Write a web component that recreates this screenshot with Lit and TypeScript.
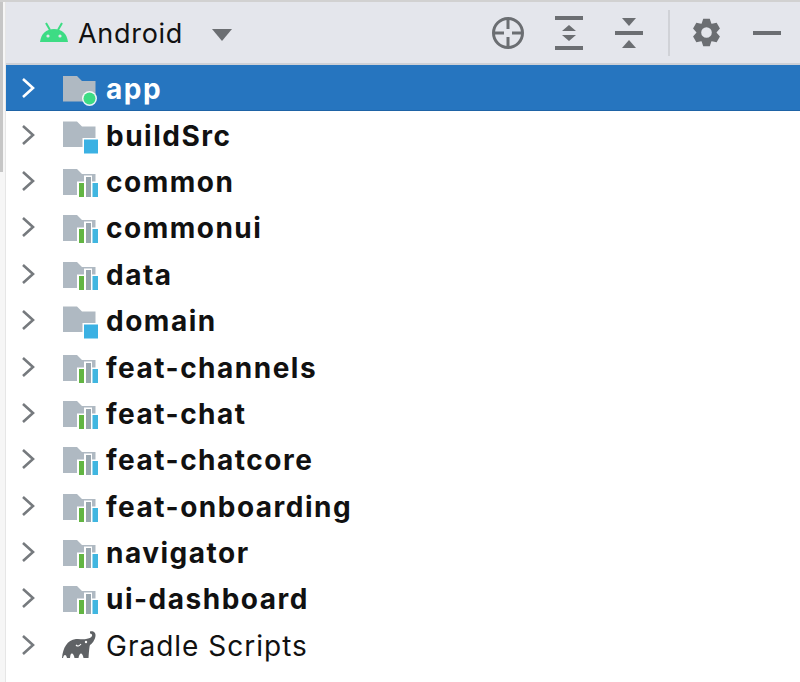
import { LitElement, html, css, svg } from 'lit';
import { customElement } from 'lit/decorators.js';

type Kind = 'module' | 'lib' | 'bars' | 'gradle';

const rows: { name: string; kind: Kind; bold?: boolean; selected?: boolean }[] = [
  { name: 'app', kind: 'module', bold: true, selected: true },
  { name: 'buildSrc', kind: 'lib', bold: true },
  { name: 'common', kind: 'bars', bold: true },
  { name: 'commonui', kind: 'bars', bold: true },
  { name: 'data', kind: 'bars', bold: true },
  { name: 'domain', kind: 'lib', bold: true },
  { name: 'feat-channels', kind: 'bars', bold: true },
  { name: 'feat-chat', kind: 'bars', bold: true },
  { name: 'feat-chatcore', kind: 'bars', bold: true },
  { name: 'feat-onboarding', kind: 'bars', bold: true },
  { name: 'navigator', kind: 'bars', bold: true },
  { name: 'ui-dashboard', kind: 'bars', bold: true },
  { name: 'Gradle Scripts', kind: 'gradle' },
];

// six rounded teeth around centre 15,15
function gearPath() {
  const cx = 15;
  const cy = 15;
  const pts: string[] = [];
  for (let i = 0; i < 6; i++) {
    const a = -Math.PI / 2 + (i * Math.PI) / 3;
    for (const [r, d] of [[10.5, -0.5], [14.5, -0.24], [14.5, 0.24], [10.5, 0.5]]) {
      pts.push(`${(cx + r * Math.cos(a + d)).toFixed(1)} ${(cy + r * Math.sin(a + d)).toFixed(1)}`);
    }
  }
  return `M${pts.join('L')}zM15 9.500a5.500 5.500 0 100 11 5.500 5.500 0 000-11z`;
}

function nodeIcon(kind: Kind) {
  if (kind === 'gradle') {
    return html`<svg class="icon" width="36" height="30" viewBox="0 0 36 30">
      <path fill="#5f6265" d="M0 28C1 18 5 10 14 9c4-.5 7 1 10 0 3-1 5-1 6-3 .5-1.500-.5-2.500-2-2.500v-2c3-1 6 1 5.500 4.500-.5 4-3.500 8-5.500 9-.5 1-1 5-1.500 13h-5c-.5-3-1.500-4.500-2.500-4.500s-2 1.500-2.500 4.500h-4c-.5-3-1.500-4.500-2.500-4.500S8.500 24 8 28H5c-.5-2-1-3-2-3s-1.500 1-2 3z"/>
      <path d="M14 15c1.500 1.500 3 1.500 5-1" fill="none" stroke="#fff" stroke-width="1.200"/>
      <circle cx="24" cy="12" r="1.200" fill="#fff"/>
    </svg>`;
  }
  const dy = kind === 'lib' ? 5.5 : 7;
  return html`<svg class="icon" width="36" height="38" viewBox="0 0 36 38">
    <path transform="translate(0 ${dy})" d="M1 0h14l5 5h13.500v${kind === 'bars' ? 21 : 20.5}H1z" fill="#afb9c2"/>
    ${kind === 'module' ? svg`<circle cx="27.500" cy="29.500" r="7.500" fill="#fff" opacity=".9"/><circle cx="27.500" cy="29.500" r="6" fill="#3ddc84"/>` : ''}
    ${kind === 'lib' ? svg`<rect x="20.500" y="22" width="15.500" height="15.500" fill="#fff"/><rect x="22" y="23.500" width="14" height="14" fill="#3bb1e3"/>` : ''}
    ${kind === 'bars' ? svg`<path d="M15 36V19.500h7v-6h8v6h6V36z" fill="#fff"/>
      <rect x="17" y="21" width="5" height="14" fill="#62b543"/>
      <rect x="24" y="15" width="5" height="20" fill="#9aa7b0"/>
      <rect x="30.500" y="21" width="5.500" height="14" fill="#40b6e0"/>` : ''}
  </svg>`;
}

@customElement('app-root')
export class AppRoot extends LitElement {
  static styles = css`
    :host {
      display: block;
      width: 800px;
      height: 682px;
      overflow: hidden;
      background: #fff;
      font-family: Inter, 'Noto Sans', sans-serif;
      color: #111;
    }

    .frame {
      position: relative;
      height: 682px;
      box-sizing: border-box;
      border-top: 2px solid #d1d1d1;
      padding-left: 6px;
      display: flex;
      flex-direction: column;
    }

    .gutter {
      position: absolute;
      left: 0;
      top: 0;
      bottom: 0;
      width: 5px;
      background: #f6f6f6;
      border-right: 1px solid #e6e6e6;
    }

    .thumb {
      width: 3px;
      height: 170px;
      background: #c6c6c6;
    }

    .toolbar {
      height: 63px;
      flex: none;
      box-sizing: border-box;
      background: #e4e6ec;
      border-bottom: 2px solid #cdd0d6;
      display: flex;
      align-items: center;
      padding-left: 34px;
    }

    .title {
      font-size: 27px;
      margin-left: 10px;
      padding-top: 2px;
      letter-spacing: 0.7px;
    }

    .caret {
      margin-left: 29px;
      margin-top: 4px;
    }

    .actions {
      margin-left: auto;
      display: flex;
      align-items: center;
      padding-right: 19px;
    }

    .sep {
      width: 2px;
      height: 46px;
      background: #d0d2d7;
      margin: 0 22px 0 25px;
    }

    .gap-l {
      margin-left: 30px;
    }

    .gap-m {
      margin-left: 32px;
    }

    .row {
      height: 46.4px;
      flex: none;
      display: flex;
      align-items: center;
      padding-left: 14px;
      font-size: 28px;
      line-height: 1;
    }

    .row.selected {
      background: #2675bf;
      color: #fff;
      border-bottom: 1px solid #1e63a6;
      box-sizing: border-box;
    }

    .row.bold {
      font-weight: 700;
      letter-spacing: 1.5px;
    }

    .row.plain {
      letter-spacing: 1px;
    }

    .label {
      padding-top: 2px;
    }

    .chevron {
      flex: none;
      margin-right: 26px;
    }

    .icon {
      flex: none;
      margin-right: 8px;
    }
  `;

  render() {
    return html`
      <div class="frame">
        <div class="gutter"><div class="thumb"></div></div>
        <div class="toolbar">
          <svg width="28" height="22" viewBox="0 0 28 22">
            <path d="M0 20C1 12 6 7 14 7s13 5 14 13z" fill="#3ddc84"/>
            <path d="M6 1l4 7M22 1l-4 7" stroke="#3ddc84" stroke-width="2"/>
            <circle cx="8" cy="14" r="1.600" fill="#e4e6ec"/>
            <circle cx="20" cy="14" r="1.600" fill="#e4e6ec"/>
          </svg>
          <span class="title">Android</span>
          <svg class="caret" width="20" height="12" viewBox="0 0 20 12">
            <path d="M0 0h20L10 12z" fill="#6b6e72"/>
          </svg>
          <div class="actions">
            <svg width="34" height="34" viewBox="0 0 34 34" fill="none" stroke="#6b6e72" stroke-width="3">
              <circle cx="17" cy="17" r="14.500"/>
              <path d="M17 2v11M17 21v11M2 17h11M21 17h11"/>
            </svg>
            <svg class="gap-l" width="28" height="34" viewBox="0 0 28 34" fill="#6b6e72">
              <rect y="0" width="28" height="4"/>
              <rect y="30" width="28" height="4"/>
              <path d="M14 9l7 6H7zM14 25l7-6H7z"/>
            </svg>
            <svg class="gap-m" width="28" height="30" viewBox="0 0 28 30" fill="#6b6e72">
              <rect y="13" width="28" height="4"/>
              <path d="M7 0h14l-7 8zM7 30h14l-7-8z"/>
            </svg>
            <div class="sep"></div>
            <svg width="29" height="29" viewBox="0 0 30 30">
              <path fill="#6b6e72" fill-rule="evenodd" d=${gearPath()}/>
            </svg>
            <svg class="gap-m" width="28" height="4" viewBox="0 0 28 4"><rect width="28" height="4" fill="#6b6e72"/></svg>
          </div>
        </div>
        ${rows.map(
          (r) => html`
            <div class="row ${r.selected ? 'selected' : ''} ${r.bold ? 'bold' : 'plain'}">
              <svg class="chevron" width="16" height="22" viewBox="0 0 16 22" fill="none"
                stroke=${r.selected ? '#fff' : '#767a7e'} stroke-width="2.600">
                <path d="M3 2l10 9-10 9"/>
              </svg>
              ${nodeIcon(r.kind)}
              <span class="label">${r.name}</span>
            </div>
          `
        )}
      </div>
    `;
  }
}
